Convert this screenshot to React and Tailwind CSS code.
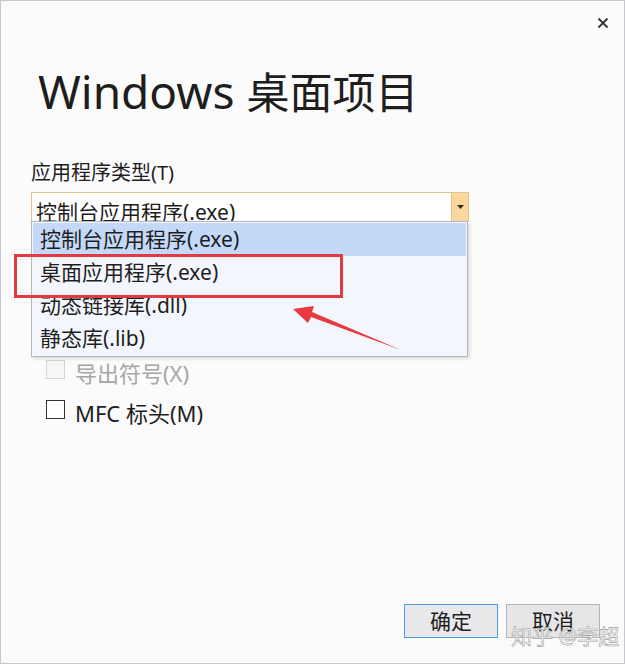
import React from "react";

const font = { fontFamily: '"Noto Sans", "Noto Sans CJK SC", sans-serif' };

export default function App() {
  return (
    <div
      className="relative w-[625px] h-[664px] bg-[#fbfbfc] border border-[#c8c8cc] overflow-hidden text-[#1e1e1e]"
      style={font}
    >
      {/* close */}
      <div className="flex justify-end pr-[15px] pt-[16px]">
        <svg width="12" height="12" viewBox="0 0 12 12">
          <path d="M1.5 1.5 L10.5 10.5 M10.5 1.5 L1.5 10.5" stroke="#333" strokeWidth="1.8" />
        </svg>
      </div>

      <div className="pl-[30px] pr-[156px]">
        <h1 className="ml-[7px] mt-[34px] text-[46px] leading-[56px] font-normal text-[#1e1e1e] whitespace-nowrap">
          Windows <span className="text-[43px]">桌面项目</span>
        </h1>

        <div className="mt-[38px] text-[20px] leading-[28px]">应用程序类型(T)</div>

        {/* combo */}
        <div className="relative mt-[5px] h-[30px] w-[438px]">
          <div className="flex h-full border border-[#e1c38f] bg-white overflow-hidden">
            <div className="flex-1 pl-[4px] pt-[4px] text-[21px] leading-[30px] whitespace-nowrap">
              控制台应用程序(.exe)
            </div>
            <div className="w-[17px] flex items-center justify-center bg-[#fbd79d] border-l border-[#e1c38f]">
              <svg width="7" height="4" viewBox="0 0 7 4">
                <path d="M0 0 H7 L3.5 4 Z" fill="#3a2a10" />
              </svg>
            </div>
          </div>

          {/* dropdown list */}
          <div className="absolute left-0 top-[29px] w-[437px] border border-[#b3b6bd] bg-[#f4f6fd] p-[1px] shadow-[2px_2px_3px_rgba(0,0,0,0.12)] z-10">
            <div className="h-[33px] bg-[#c4d9f8] pl-[7px] text-[21px] leading-[33px]">控制台应用程序(.exe)</div>
            <div className="h-[33px] pl-[7px] text-[21px] leading-[33px]">桌面应用程序(.exe)</div>
            <div className="h-[33px] pl-[7px] text-[21px] leading-[33px]">动态链接库(.dll)</div>
            <div className="h-[33px] pl-[7px] text-[21px] leading-[33px]">静态库(.lib)</div>
          </div>
        </div>

        {/* checkboxes */}
        <div className="mt-[136px] ml-[15px] flex flex-col gap-[10px]">
          <div className="flex items-center gap-[10px] h-[30px]">
            <div className="w-[19px] h-[19px] border border-[#d5d5d8] bg-[#f6f6f7] -mt-[8px]" />
            <span className="text-[22px] text-[#a6a6a6]">导出符号(X)</span>
          </div>
          <div className="flex items-center gap-[10px] h-[30px]">
            <div className="w-[19px] h-[19px] border border-[#333] bg-white -mt-[8px]" />
            <span className="text-[22px]">MFC 标头(M)</span>
          </div>
        </div>
      </div>

      {/* buttons */}
      <div className="absolute left-[403px] top-[603px] flex gap-[8px]">
        <button className="w-[94px] h-[34px] border border-[#4f9de0] bg-[#e9e9ec] text-[21px] leading-[30px]" style={font}>
          确定
        </button>
        <button className="w-[94px] h-[34px] border border-[#b5b5b8] bg-[#e6e6e8] text-[21px] leading-[30px]" style={font}>
          取消
        </button>
      </div>

      {/* watermark */}
      <div className="absolute left-[510px] top-[620px] text-[21px] text-white/85 [-webkit-text-stroke:0.6px_#a0a0a0] whitespace-nowrap" style={font}>
        知乎 @李超
      </div>

      {/* red annotation box */}
      <div className="absolute left-[13px] top-[253px] w-[329px] h-[44px] border-[3px] border-[#e23a40] z-20" />

      {/* red arrow */}
      <svg className="absolute left-0 top-0 z-20" width="625" height="664">
        <path d="M400 349 L310 316 L307 322 L292 308 L313 305 L311 311 Z" fill="#e8393d" />
      </svg>
    </div>
  );
}
